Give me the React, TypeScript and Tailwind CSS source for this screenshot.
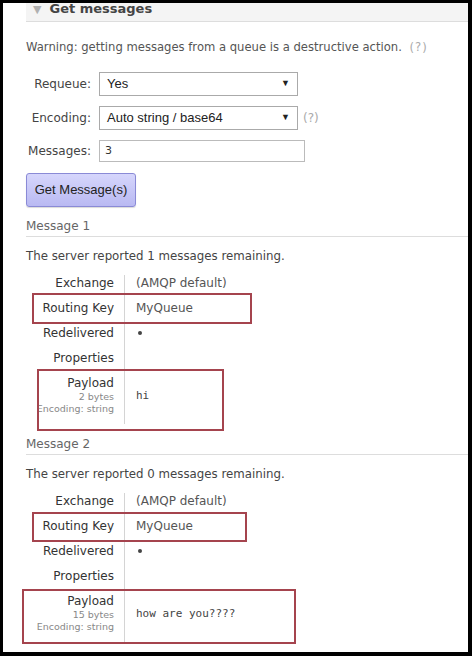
import React from 'react';

const font = { fontFamily: '"DejaVu Sans", Verdana, sans-serif' };

type Row = { label: string; value?: React.ReactNode; sub?: string[]; mono?: boolean };

const MessageTable = ({ rows }: { rows: Row[] }) => (
    <div className="flex flex-col">
        {rows.map((r, i) => (
            <div key={i} className="flex">
                <div className="w-[99px] shrink-0 pr-[10px] pb-[9px] text-right border-r border-[#d4d4d4]">
                    <div className="text-[12px] leading-[16px] text-[#333]">{r.label}</div>
                    {r.sub &&
                        r.sub.map((s, j) => (
                            <div key={j} className="text-[9.5px] leading-[12px] text-[#888] whitespace-nowrap">
                                {s}
                            </div>
                        ))}
                </div>
                <div
                    className={
                        r.mono
                            ? 'pl-[11px] pt-[13px] text-[11px] leading-[16px] text-[#444] font-["DejaVu_Sans_Mono",monospace]'
                            : 'pl-[11px] text-[12px] leading-[16px] text-[#555]'
                    }
                >
                    {r.value}
                </div>
            </div>
        ))}
    </div>
);

const Message = ({ n, remaining, payload, bytes }: { n: number; remaining: number; payload: string; bytes: number }) => (
    <div>
        <div className="text-[12px] leading-[16px] text-[#666] pb-[2px] border-b border-[#ddd]">Message {n}</div>
        <div className="mt-[11px] text-[11.8px] leading-[16px] text-[#444]">
            The server reported {remaining} messages remaining.
        </div>
        <div className="mt-[11px]">
            <MessageTable
                rows={[
                    { label: 'Exchange', value: '(AMQP default)' },
                    { label: 'Routing Key', value: 'MyQueue' },
                    {
                        label: 'Redelivered',
                        value: <span className="inline-block ml-[2px] mb-[1px] w-[4px] h-[4px] rounded-full bg-[#444] align-middle" />,
                    },
                    { label: 'Properties', value: '' },
                    { label: 'Payload', value: payload, sub: [`${bytes} bytes`, 'Encoding: string'], mono: true },
                ]}
            />
        </div>
    </div>
);

const Select = ({ text }: { text: string }) => (
    <div className="w-[199px] h-[24px] border border-[#aaa] bg-white flex items-center justify-between pl-[7px] pr-[7px] text-[13px] text-[#222] font-['Liberation_Sans',Arial,sans-serif]">
        <span>{text}</span>
        <span className="text-[9px] text-[#222]">▼</span>
    </div>
);

export default function App() {
    return (
        <div className="w-[472px] h-[656px] bg-black pt-[3px] pl-[3px] pr-[4px] pb-[4px]" style={font}>
            <div className="relative h-full bg-white overflow-hidden pl-[23px]">
                {/* section header, cut off at the top */}
                <div className="h-[19px] bg-[#f4f4f4] border-b border-[#ddd] flex items-start">
                    <span className="ml-[7px] -mt-[1px] text-[11px] text-[#b0b0b0] leading-[16px]">▼</span>
                    <span className="ml-[8px] -mt-[2px] text-[13px] font-bold leading-[16px] text-[#444]">Get messages</span>
                </div>

                <div className="mt-[17px] text-[11.6px] leading-[16px] text-[#555]">
                    Warning: getting messages from a queue is a destructive action.{' '}
                    <span className="ml-[4px] text-[#aaa] tracking-[1px]">(?)</span>
                </div>

                <div className="mt-[17px] flex items-center">
                    <div className="w-[66px] pr-[1px] text-right text-[12px] text-[#444]">Requeue:</div>
                    <div className="ml-[7px]">
                        <Select text="Yes" />
                    </div>
                </div>
                <div className="mt-[10px] flex items-center">
                    <div className="w-[66px] pr-[1px] text-right text-[12px] text-[#444]">Encoding:</div>
                    <div className="ml-[7px]">
                        <Select text="Auto string / base64" />
                    </div>
                    <span className="ml-[5px] text-[12px] text-[#aaa]">(?)</span>
                </div>
                <div className="mt-[10px] flex items-center">
                    <div className="w-[66px] pr-[1px] text-right text-[12px] text-[#444]">Messages:</div>
                    <div className="ml-[7px] w-[206px] h-[22px] border border-[#bbb] pl-[5px] flex items-center text-[11px] text-[#333]">
                        3
                    </div>
                </div>

                <button className="mt-[11px] w-[110px] h-[34px] rounded-[3px] border border-[#8a8ad6] bg-gradient-to-b from-[#d6d6fc] to-[#b9b9f2] text-[13px] text-[#222] font-['Liberation_Sans',Arial,sans-serif] shadow-[0_1px_1px_rgba(0,0,0,0.15)]">
                    Get Message(s)
                </button>

                <div className="mt-[11px]">
                    <Message n={1} remaining={1} payload="hi" bytes={2} />
                </div>
                <div className="mt-[12px]">
                    <Message n={2} remaining={0} payload="how are you????" bytes={15} />
                </div>

                {/* red annotation boxes */}
                <div className="absolute left-[29px] top-[290px] w-[220px] h-[31px] border-2 border-[#a5444e]" />
                <div className="absolute left-[34px] top-[366px] w-[187px] h-[62px] border-2 border-[#a5444e]" />
                <div className="absolute left-[29px] top-[509px] w-[215px] h-[30px] border-2 border-[#a5444e]" />
                <div className="absolute left-[19px] top-[586px] w-[274px] h-[55px] border-2 border-[#a5444e]" />
            </div>
        </div>
    );
}
